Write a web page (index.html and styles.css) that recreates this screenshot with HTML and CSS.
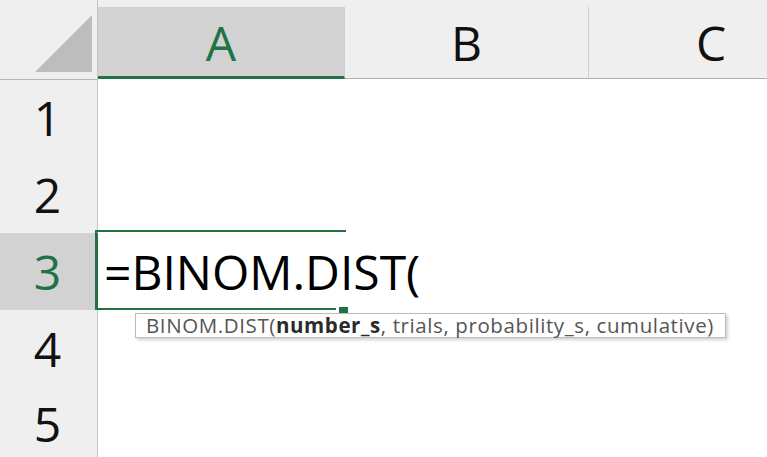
FILE: index.html
```html
<!DOCTYPE html>
<html lang="en">
<head>
<meta charset="utf-8">
<title>BINOM.DIST</title>
<link rel="stylesheet" href="styles.css">
</head>
<body>
<div class="sheet">
  <div class="row head">
    <div class="corner">
      <svg class="corner-tri" width="98" height="79" viewBox="0 0 98 79"><polygon points="35,72 92,15 92,72" fill="#bdbdbd"/></svg>
    </div>
    <div class="colhead sel">A</div>
    <div class="colhead">B</div>
    <div class="colhead last">C</div>
  </div>
  <div class="row">
    <div class="rowhead">1</div>
    <div class="cell"></div><div class="cell"></div><div class="cell"></div>
  </div>
  <div class="row">
    <div class="rowhead">2</div>
    <div class="cell"></div><div class="cell"></div><div class="cell"></div>
  </div>
  <div class="row">
    <div class="rowhead sel">3</div>
    <div class="cell active">
      <span class="entry">=BINOM.DIST(</span>
      <span class="frame-bottom"></span>
      <span class="fill-handle"></span>
      <div class="tooltip">BINOM.DIST(<b>number_s</b>, trials, probability_s, cumulative)</div>
    </div>
    <div class="cell"></div><div class="cell"></div>
  </div>
  <div class="row">
    <div class="rowhead">4</div>
    <div class="cell"></div><div class="cell"></div><div class="cell"></div>
  </div>
  <div class="row lastrow">
    <div class="rowhead">5</div>
    <div class="cell"></div><div class="cell"></div><div class="cell"></div>
  </div>
</div>
</body>
</html>
```

FILE: styles.css
```css
html, body {
  margin: 0;
  padding: 0;
  background: #ffffff;
  overflow: hidden;
}

.sheet {
  width: 767px;
  height: 457px;
  overflow: hidden;
  font-family: "Open Sans", "Noto Sans", sans-serif;
  color: #000;
}

.row {
  display: grid;
  grid-template-columns: 98px 247px 244px 1fr;
  height: 77px;
}

.row.head {
  height: 79px;
  background: #efefef;
}

.row.lastrow {
  height: 70px;
}

.corner {
  position: relative;
  box-sizing: border-box;
  border-right: 1px solid #c4c4c4;
  border-bottom: 1px solid #b4b4b4;
}

.corner-tri {
  display: block;
}

.colhead {
  box-sizing: border-box;
  margin-top: 7px;
  height: 72px;
  border-right: 1px solid #cfcfcf;
  border-bottom: 1px solid #b0b0b0;
  font-size: 48px;
  line-height: 70px;
  text-align: center;
  color: #111;
  padding-top: 1px;
}

.colhead.last {
  border-right: none;
  padding-left: 66px;
}

.colhead.sel {
  background: #d2d2d2;
  color: #217346;
  border-bottom: 3px solid #217346;
}

.rowhead {
  box-sizing: border-box;
  background: #efefef;
  border-right: 1px solid #c4c4c4;
  border-bottom: 1px solid #d6d6d6;
  font-size: 48px;
  line-height: 76px;
  padding-top: 1px;
  padding-right: 2px;
  text-align: center;
  color: #111;
}

.lastrow .rowhead {
  line-height: 56px;
  padding-top: 9px;
  border-bottom: none;
}

.rowhead.sel {
  background: #d2d2d2;
  color: #217346;
  border-right-color: #217346;
}

.cell {
  background: #fff;
}

.cell.active {
  position: relative;
  z-index: 2;
}

.cell.active::before {
  content: "";
  position: absolute;
  left: -3px;
  top: -3px;
  width: 249px;
  height: 78px;
  border-top: 2px solid #217346;
  border-left: 2px solid #217346;
}

.entry {
  display: block;
  white-space: nowrap;
  font-size: 48px;
  line-height: 76px;
  padding-left: 6px;
  padding-top: 1px;
  color: #000;
}

.frame-bottom {
  position: absolute;
  left: -3px;
  top: 75px;
  width: 241px;
  height: 2px;
  background: #217346;
}

.fill-handle {
  position: absolute;
  left: 240px;
  top: 73px;
  width: 9px;
  height: 9px;
  background: #217346;
  border: 1px solid #fff;
}

.tooltip {
  position: absolute;
  left: 37px;
  top: 80px;
  z-index: 3;
  box-sizing: border-box;
  height: 25px;
  padding: 0 11px 0 10px;
  background: #fff;
  border: 1px solid #bcbcbc;
  box-shadow: 2px 2px 3px rgba(0, 0, 0, 0.18);
  white-space: nowrap;
  font-size: 20.5px;
  line-height: 23px;
  letter-spacing: 0.6px;
  color: #555;
}

.tooltip b {
  color: #2a2a2a;
  font-weight: 700;
}
```
